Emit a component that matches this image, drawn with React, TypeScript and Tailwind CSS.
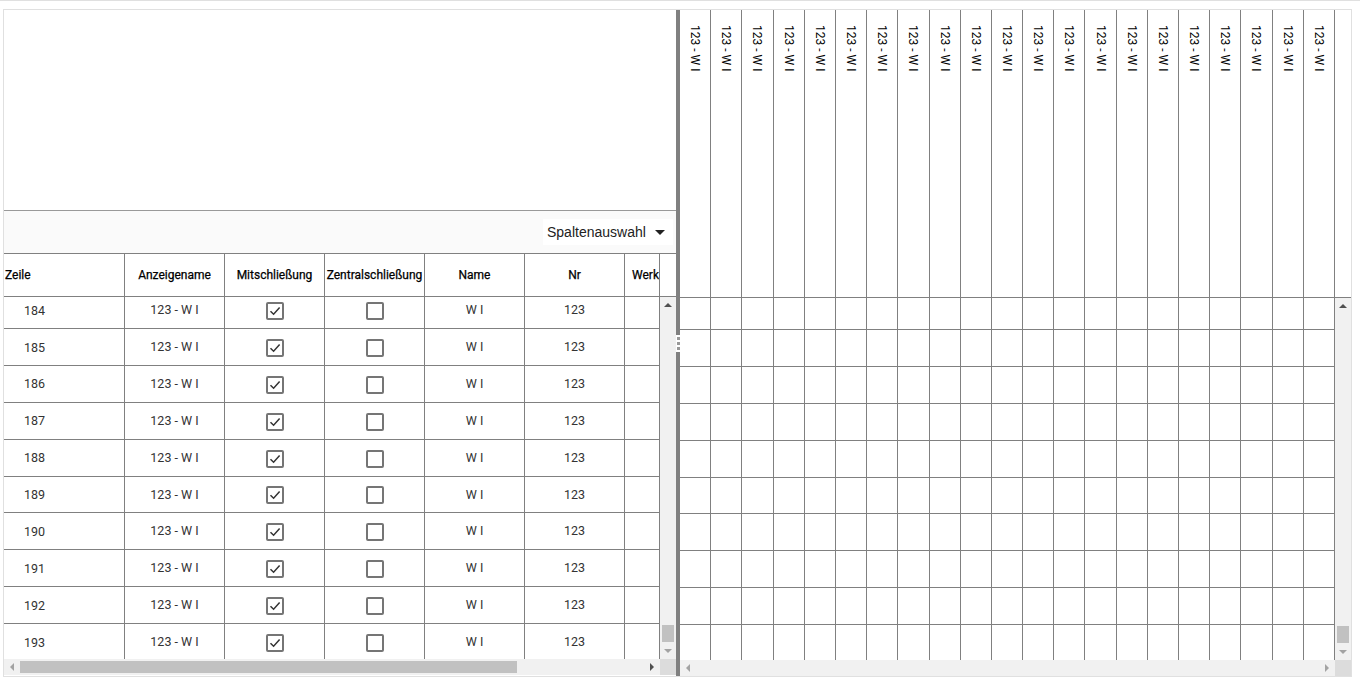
import React from 'react';

const rows = [184, 185, 186, 187, 188, 189, 190, 191, 192, 193];
const rightCols = Array.from({ length: 21 }, (_, i) => i);

const Arrow: React.FC<{ dir: 'up' | 'down' | 'left' | 'right'; dark?: boolean }> = ({ dir, dark }) => {
  const fill = dark ? '#505050' : '#a3a3a3';
  const pts = {
    up: '0,4 4,0 8,4',
    down: '0,0 8,0 4,4',
    left: '4,0 4,8 0,4',
    right: '0,0 0,8 4,4',
  }[dir];
  const vertical = dir === 'up' || dir === 'down';
  return (
    <svg width={vertical ? 8 : 4} height={vertical ? 4 : 8} viewBox={vertical ? '0 0 8 4' : '0 0 4 8'}>
      <polygon points={pts} fill={fill} />
    </svg>
  );
};

const Checkbox: React.FC<{ checked?: boolean }> = ({ checked }) => (
  <div className="w-[18px] h-[18px] border-2 border-[#757575] rounded-[2px] flex items-center justify-center bg-white">
    {checked && (
      <svg width="14" height="14" viewBox="0 0 14 14">
        <path d="M2.5 7.2 L5.6 10.2 L11.6 3.6" fill="none" stroke="#333" strokeWidth="1.5" />
      </svg>
    )}
  </div>
);

const VScroll: React.FC = () => (
  <div className="w-[16px] shrink-0 bg-[#f1f1f1] flex flex-col items-center">
    <div className="h-[16px] flex items-center justify-center"><Arrow dir="up" dark /></div>
    <div className="flex-1 w-full flex flex-col justify-end items-center">
      <div className="w-[12px] h-[17px] bg-[#c1c1c1] mb-[1px]" />
    </div>
    <div className="h-[16px] flex items-center justify-center"><Arrow dir="down" /></div>
  </div>
);

const cellBorder = 'border-r border-[#808080]';

export default function App() {
  return (
    <div className="w-[1360px] h-[692px] bg-white border-t border-[#e0e0e0] pt-[8px] pl-[3px]" style={{ fontFamily: 'Roboto, "Liberation Sans", sans-serif' }}>
      <div className="w-[1349px] h-[668px] border border-[#e0e0e0] flex">
        {/* Left pane */}
        <div className="w-[672px] flex flex-col shrink-0">
          <div className="h-[201px] border-b border-[#999]" />
          <div className="h-[42px] bg-[#fafafa] flex items-center justify-end pr-[3px]">
            <div className="h-[26px] w-[130px] bg-white flex items-center pl-[4px] gap-[9px] text-[14px] text-[#222]" style={{ fontFamily: '"Liberation Sans", Arial, sans-serif' }}>
              <span>Spaltenauswahl</span>
              <svg width="10" height="5" viewBox="0 0 10 5"><polygon points="0,0 10,0 5,5" fill="#222" /></svg>
            </div>
          </div>
          {/* Header */}
          <div className="h-[44px] border-y border-[#808080] flex text-[12px] text-black [-webkit-text-stroke:0.25px_#000]">
            <div className={`w-[121px] ${cellBorder} flex items-center pl-[1px]`}>Zeile</div>
            {['Anzeigename', 'Mitschließung', 'Zentralschließung', 'Name', 'Nr'].map((h) => (
              <div key={h} className={`w-[100px] ${cellBorder} flex items-center justify-center whitespace-nowrap overflow-hidden`}>{h}</div>
            ))}
            <div className={`w-[35px] ${cellBorder} flex items-center overflow-hidden whitespace-nowrap pl-[7px]`}>Werk</div>
            <div className="flex-1" />
          </div>
          {/* Body */}
          <div className="h-[362px] flex">
            <div className="w-[656px] overflow-hidden">
              <div className="mt-[-4.875px]">
                {rows.map((r) => (
                  <div key={r} className="h-[36.875px] border-b border-[#808080] flex text-[12.5px] text-[#333]">
                    <div className={`w-[121px] ${cellBorder} flex items-center pl-[20px] pt-[2px]`}>{r}</div>
                    <div className={`w-[100px] ${cellBorder} flex items-center justify-center pt-[1px]`}>123 - W I</div>
                    <div className={`w-[100px] ${cellBorder} flex items-center justify-center pt-[2px]`}><Checkbox checked /></div>
                    <div className={`w-[100px] ${cellBorder} flex items-center justify-center pt-[2px]`}><Checkbox /></div>
                    <div className={`w-[100px] ${cellBorder} flex items-center justify-center pt-[1px]`}>W I</div>
                    <div className={`w-[100px] ${cellBorder} flex items-center justify-center pt-[1px]`}>123</div>
                    <div className={`w-[35px] ${cellBorder}`} />
                  </div>
                ))}
              </div>
            </div>
            <VScroll />
          </div>
          {/* H scroll */}
          <div className="h-[16px] flex">
            <div className="w-[656px] bg-[#f1f1f1] flex items-center">
              <div className="w-[16px] flex justify-center"><Arrow dir="left" /></div>
              <div className="flex-1 h-full flex items-center">
                <div className="w-[497px] h-[12px] bg-[#c1c1c1]" />
              </div>
              <div className="w-[16px] flex justify-center"><Arrow dir="right" dark /></div>
            </div>
            <div className="w-[16px] bg-[#dcdcdc]" />
          </div>
        </div>

        {/* Splitter */}
        <div className="w-[4px] bg-[#808080] shrink-0 relative">
          <div className="absolute left-0 top-[325px] w-[4px] h-[17px] bg-white flex flex-col items-center justify-around py-[1px]">
            <div className="w-[3px] h-[3px] bg-[#999]" />
            <div className="w-[3px] h-[3px] bg-[#999]" />
            <div className="w-[3px] h-[3px] bg-[#999]" />
          </div>
        </div>

        {/* Right pane */}
        <div className="flex-1 flex flex-col min-w-0">
          <div className="h-[288px] border-b border-[#808080] flex">
            <div className="w-[655px] flex overflow-hidden">
              {rightCols.map((c) => (
                <div key={c} className={`w-[31.2px] shrink-0 ${cellBorder} flex justify-center pt-[15px]`}>
                  <span className="[writing-mode:vertical-rl] text-[12px] text-black whitespace-nowrap">123 - W I</span>
                </div>
              ))}
            </div>
            <div className="flex-1" />
          </div>
          <div className="h-[362px] flex">
            <div className="w-[655px] overflow-hidden">
              <div className="mt-[-4.875px]">
                {rows.map((r) => (
                  <div key={r} className="h-[36.875px] border-b border-[#808080] flex">
                    {rightCols.map((c) => (
                      <div key={c} className={`w-[31.2px] shrink-0 ${cellBorder}`} />
                    ))}
                  </div>
                ))}
              </div>
            </div>
            <VScroll />
          </div>
          <div className="h-[16px] flex">
            <div className="w-[655px] bg-[#f1f1f1] flex items-center justify-between px-[6px]">
              <Arrow dir="left" />
              <Arrow dir="right" />
            </div>
            <div className="w-[16px] bg-[#dcdcdc]" />
          </div>
        </div>
      </div>
    </div>
  );
}
